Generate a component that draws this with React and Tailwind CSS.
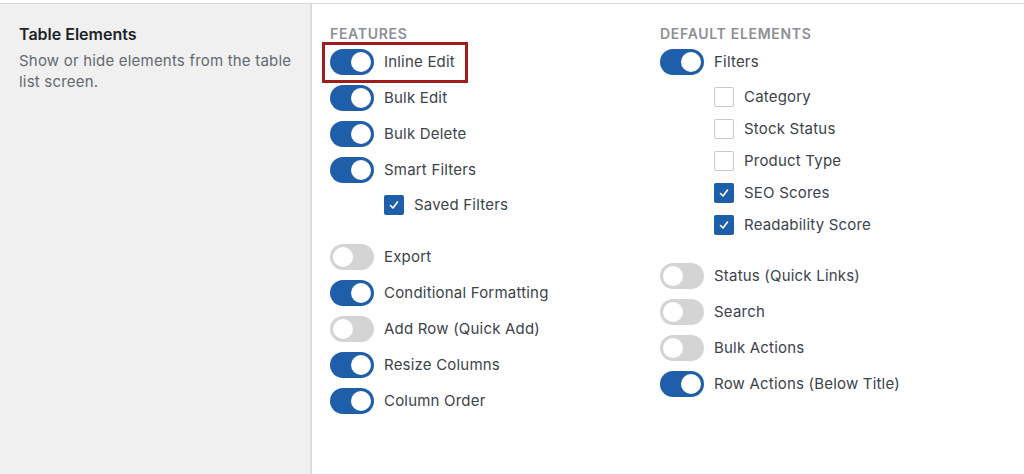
import React from 'react';

const font = { fontFamily: 'Inter, "Noto Sans", sans-serif' };

function Toggle({ on }) {
    return (
        <span
            className={
                'relative inline-flex shrink-0 w-[44px] h-[26px] rounded-full ' +
                (on ? 'bg-[#1f5ea8]' : 'bg-[#d4d4d4]')
            }
        >
            <span
                className={
                    'absolute top-[3px] w-[20px] h-[20px] rounded-full bg-white ' +
                    (on ? 'right-[3px]' : 'left-[3px]')
                }
            />
        </span>
    );
}

function Check({ on }) {
    return (
        <span
            className={
                'flex shrink-0 items-center justify-center w-[20px] h-[20px] rounded-[2px] ' +
                (on ? 'bg-[#1f5ea8]' : 'bg-white border border-[#c8c8c8]')
            }
        >
            {on && (
                <svg width="12" height="12" viewBox="0 0 12 12" fill="none">
                    <path d="M2.5 6.5 L5 9 L9.5 3" stroke="white" strokeWidth="1.6" strokeLinecap="round" strokeLinejoin="round" />
                </svg>
            )}
        </span>
    );
}

function ToggleRow({ on, label, highlight }) {
    return (
        <div className="relative flex items-center gap-[10px] h-[26px]">
            <Toggle on={on} />
            <span className="text-[15px] tracking-[0.2px] text-[#3c434a]">{label}</span>
            {highlight && (
                <span className="absolute left-[-8px] top-[-7px] w-[146px] h-[41px] border-[3px] border-[#a01b1b]" />
            )}
        </div>
    );
}

function CheckRow({ on, label }) {
    return (
        <div className="flex items-center gap-[10px] h-[20px] pl-[54px]">
            <Check on={on} />
            <span className="text-[15px] tracking-[0.2px] text-[#3c434a]">{label}</span>
        </div>
    );
}

function Heading({ children }) {
    return (
        <div className="text-[14px] leading-[18px] font-semibold tracking-[0.7px] text-[#8c8f94] uppercase mb-[6px]">
            {children}
        </div>
    );
}

export default function App() {
    return (
        <div className="w-[1024px] h-[474px] bg-white pt-[3px] overflow-hidden" style={font}>
            <div className="flex h-full border-t border-[#dcdcde]">
                <div className="w-[312px] shrink-0 bg-[#f0f0f1] border-r-2 border-[#dcdcde] pl-[19px] pr-4 pt-[20px]">
                    <h2 className="text-[16px] leading-[20px] font-semibold text-[#1d2327]">Table Elements</h2>
                    <p className="mt-[6px] text-[15px] leading-[21px] tracking-[0.2px] text-[#646970]">
                        Show or hide elements from the table list screen.
                    </p>
                </div>

                <div className="flex pl-[18px] pt-[21px]">
                    <div className="w-[330px] flex flex-col">
                        <Heading>Features</Heading>
                        <div className="flex flex-col gap-[10px]">
                            <ToggleRow on label="Inline Edit" highlight />
                            <ToggleRow on label="Bulk Edit" />
                            <ToggleRow on label="Bulk Delete" />
                            <ToggleRow on label="Smart Filters" />
                        </div>
                        <div className="mt-[12px]">
                            <CheckRow on label="Saved Filters" />
                        </div>
                        <div className="mt-[29px] flex flex-col gap-[10px]">
                            <ToggleRow on={false} label="Export" />
                            <ToggleRow on label="Conditional Formatting" />
                            <ToggleRow on={false} label="Add Row (Quick Add)" />
                            <ToggleRow on label="Resize Columns" />
                            <ToggleRow on label="Column Order" />
                        </div>
                    </div>

                    <div className="w-[330px] flex flex-col">
                        <Heading>Default Elements</Heading>
                        <ToggleRow on label="Filters" />
                        <div className="mt-[12px] flex flex-col gap-[12px]">
                            <CheckRow on={false} label="Category" />
                            <CheckRow on={false} label="Stock Status" />
                            <CheckRow on={false} label="Product Type" />
                            <CheckRow on label="SEO Scores" />
                            <CheckRow on label="Readability Score" />
                        </div>
                        <div className="mt-[28px] flex flex-col gap-[10px]">
                            <ToggleRow on={false} label="Status (Quick Links)" />
                            <ToggleRow on={false} label="Search" />
                            <ToggleRow on={false} label="Bulk Actions" />
                            <ToggleRow on label="Row Actions (Below Title)" />
                        </div>
                    </div>
                </div>
            </div>
        </div>
    );
}
